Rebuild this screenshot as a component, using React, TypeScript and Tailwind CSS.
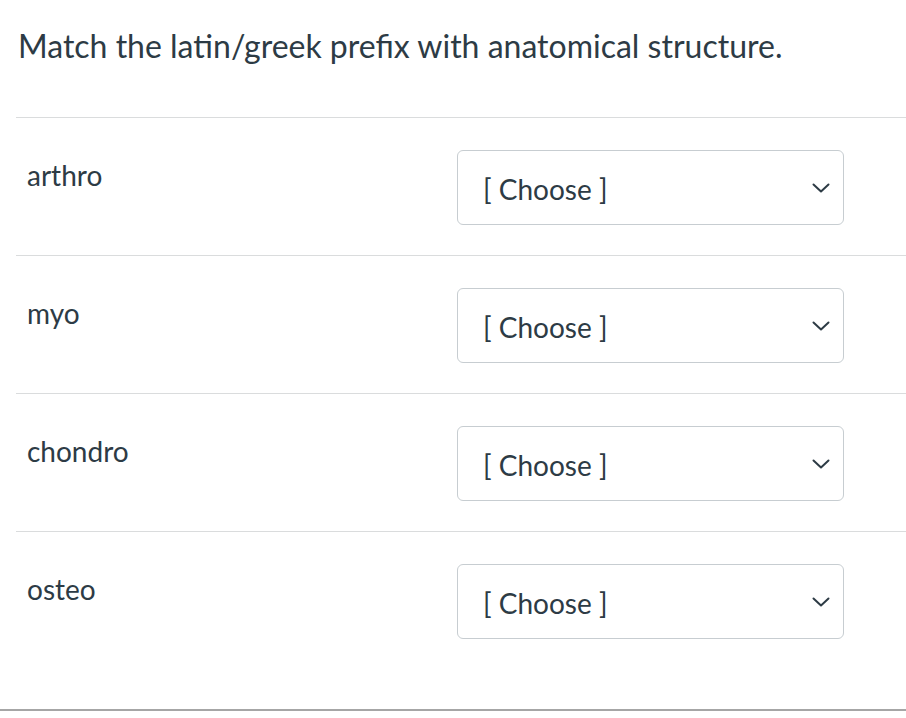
const rows = ['arthro', 'myo', 'chondro', 'osteo']

function Chevron() {
  return (
    <svg width="18" height="10" viewBox="0 0 18 10" fill="none">
      <path d="M1.5 1.5 L9 8.5 L16.5 1.5" stroke="#2d3b45" strokeWidth="2" strokeLinecap="round" strokeLinejoin="round" />
    </svg>
  )
}

export default function App() {
  return (
    <div className="w-[906px] h-[718px] bg-white text-[#2d3b45] font-['Lato','Liberation_Sans',sans-serif] flex flex-col">
      <h1 className="pl-[18px] pt-[26px] h-[117px] text-[32px] leading-[40px] font-normal">
        Match the latin/greek prefix with anatomical structure.
      </h1>
      <div className="ml-[16px]">
        {rows.map((r) => (
          <div key={r} className="h-[138px] border-t border-[#dadcdd] flex items-start">
            <div className="w-[441px] pl-[11px] pt-[41px] text-[28px] leading-[32px]">{r}</div>
            <div className="mt-[32px] w-[387px] h-[75px] border border-[#c7cdd1] rounded-[6px] flex items-center justify-between pl-[25px] pr-[13px]">
              <span className="text-[28px] leading-[32px] pt-[2px]">[ Choose ]</span>
              <Chevron />
            </div>
          </div>
        ))}
      </div>
      <div className="mt-auto mb-[7px] h-[2px] bg-[#a6a6a6]" />
    </div>
  )
}
